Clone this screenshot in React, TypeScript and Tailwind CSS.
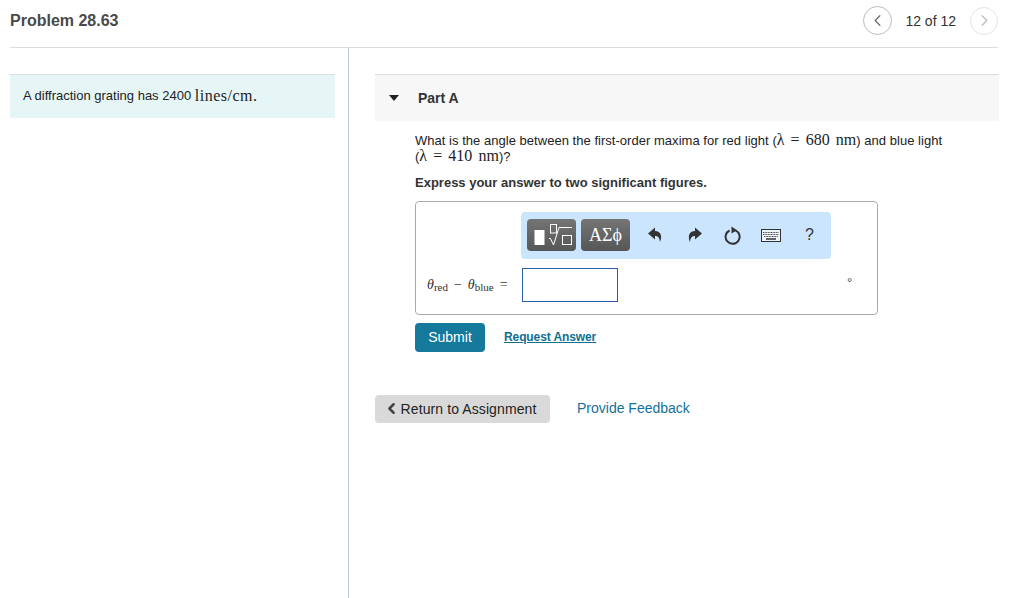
import React from 'react';
import { ChevronLeft, ChevronRight } from 'lucide-react';

const Serif: React.FC<{ children: React.ReactNode; className?: string }> = ({ children, className }) => (
  <span className={`font-['Liberation_Serif',serif] ${className ?? ''}`}>{children}</span>
);

const TemplateIcon = () => (
  <svg className="mb-[3px] ml-[3px]" width="38" height="24" viewBox="0 0 38 24" fill="none">
    <rect x="0.500" y="8" width="10" height="15" fill="#fff" />
    <rect x="16.500" y="2.500" width="6" height="8.500" stroke="#fff" strokeWidth="1" />
    <path d="M15 16.500h1.500l3 6.500 5.500-17.500h13" stroke="#fff" strokeWidth="1" />
    <rect x="28.500" y="13.500" width="9" height="9" stroke="#fff" strokeWidth="1" />
  </svg>
);

const UndoIcon = () => (
  <svg width="15" height="16" viewBox="0 0 15 16" fill="#333">
    <path d="M7 0.500L0 6.500l7 6V9c3 0 4.500 1.500 5 6 2.500-5.500 1-11-5-11z" />
  </svg>
);

const RedoIcon = () => (
  <svg width="15" height="16" viewBox="0 0 15 16" fill="#333">
    <path d="M8 0.500l7 6-7 6V9c-3 0-4.500 1.500-5 6C.5 9.500 2 4 8 4z" />
  </svg>
);

const ResetIcon = () => (
  <svg width="18" height="19" viewBox="0 0 18 19" fill="none">
    <path d="M5.500 4.500a7 7 0 1 0 6-.1" stroke="#333" strokeWidth="2" />
    <path d="M7.500 0.500l5.500 3.700-5.500 3.300z" fill="#333" />
  </svg>
);

const KeyboardIcon = () => (
  <svg width="20" height="13" viewBox="0 0 20 13" fill="none">
    <rect x="0.500" y="0.500" width="19" height="12" stroke="#333" fill="#eef4fb" />
    <path d="M2 3.500h16M2 5.500h16M3 7.500h14" stroke="#444" strokeWidth="1" strokeDasharray="1 0.600" />
    <path d="M5 10h10" stroke="#333" strokeWidth="1.500" />
  </svg>
);

export default function App() {
  return (
    <div className="h-[598px] w-[1024px] overflow-hidden bg-white font-['Liberation_Sans',Arial,sans-serif] text-[13px] text-[#222]">
      <header className="mx-2.5 flex h-12 w-[988px] items-center justify-between border-b border-[#ddd] pb-1.5">
        <h1 className="text-base font-bold text-[#4a4a4a]">Problem 28.63</h1>
        <div className="flex items-center">
          <button className="flex h-[29px] w-[29px] items-center justify-center rounded-full border border-[#bbb] text-[#666]">
            <ChevronLeft size={19} strokeWidth={1.5} />
          </button>
          <span className="ml-[13px] mr-3.5 text-sm text-[#333]">12 of 12</span>
          <button className="flex h-7 w-7 items-center justify-center rounded-full border border-[#e3e3e3] text-[#bbb]">
            <ChevronRight size={19} strokeWidth={1.5} />
          </button>
        </div>
      </header>

      <div className="flex h-[550px]">
        <aside className="w-[349px] shrink-0 border-r border-[#b9c9dc] pl-2.5 pr-[13px] pt-[26px]">
          <div className="flex h-11 items-center whitespace-pre border-t border-[#ddd] bg-[#e6f6f7] pb-0.5 pl-[13px]">
            A diffraction grating has 2400 <Serif className="text-base tracking-[0.5px]">lines/cm.</Serif>
          </div>
        </aside>

        <main className="ml-[26px] w-[624px] pt-[26px]">
          <div className="flex h-[47px] items-center border-t border-[#ddd] bg-[#f7f7f7] pl-3.5">
            <span className="h-0 w-0 border-x-[5px] border-t-[6px] border-x-transparent border-t-[#222]" />
            <h2 className="ml-[19px] text-sm font-bold text-[#333]">Part A</h2>
          </div>

          <div className="pl-10 pt-3">
            <p className="w-[540px] leading-4 tracking-[0.03px]">
              What is the angle between the first-order maxima for red light (
              <Serif className="text-base leading-[0] [word-spacing:2px]">λ = 680 nm</Serif>) and blue light
              <br />
              (<Serif className="text-base leading-[0] [word-spacing:2px]">λ = 410 nm</Serif>)?
            </p>
            <p className="mt-2 font-bold text-[#333]">Express your answer to two significant figures.</p>

            <div className="mt-2 h-[114px] w-[463px] rounded border border-[#aaa] pl-[11px] pt-2.5">
              <div className="ml-[94px] flex h-[47px] w-[310px] items-center rounded bg-[#cce5ff] pl-1.5">
                <button className="flex h-8 w-[49px] items-center justify-center rounded bg-gradient-to-b from-[#757575] to-[#565656]">
                  <TemplateIcon />
                </button>
                <button className="ml-[5px] flex h-8 w-[49px] items-center justify-center rounded bg-gradient-to-b from-[#757575] to-[#565656]">
                  <Serif className="text-lg text-white">ΑΣϕ</Serif>
                </button>
                <span className="ml-[18px]"><UndoIcon /></span>
                <span className="ml-6"><RedoIcon /></span>
                <span className="ml-[22px]"><ResetIcon /></span>
                <span className="ml-[19px]"><KeyboardIcon /></span>
                <span className="ml-6 text-base text-[#333]">?</span>
              </div>

              <div className="mt-[9px] flex items-center">
                <Serif className="w-[95px] whitespace-nowrap text-sm text-[#333] [word-spacing:2.500px]">
                  <i>θ</i><sub className="text-[11px]">red</sub> − <i>θ</i><sub className="text-[11px]">blue</sub> =
                </Serif>
                <input className="h-[34px] w-[96px] border border-[#2a5db0] outline-none" />
                <span className="mb-1 ml-[229px] text-[#444]">°</span>
              </div>
            </div>

            <div className="mt-2 flex items-center">
              <button className="h-[29px] w-[70px] rounded-sm bg-[#14799b] text-sm text-white">Submit</button>
              <a className="ml-[19px] text-xs font-bold tracking-[-0.1px] text-[#0f6f93] underline">Request Answer</a>
            </div>
          </div>

          <div className="mt-[43px] flex items-center">
            <button className="flex h-7 w-[175px] items-center justify-center gap-px rounded-sm bg-[#d9d9d9] pr-1.5 text-sm tracking-[0.1px] text-[#222]">
              <ChevronLeft size={17} strokeWidth={3.5} className="text-[#444]" />
              Return to Assignment
            </button>
            <a className="mb-0.5 ml-[27px] text-sm text-[#14709a]">Provide Feedback</a>
          </div>
        </main>
      </div>
    </div>
  );
}
